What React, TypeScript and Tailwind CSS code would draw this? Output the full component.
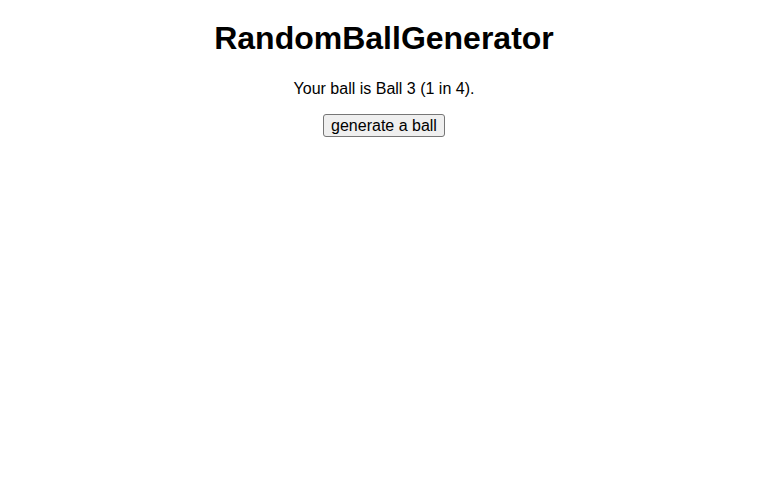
const App = () => {
  return (
    <div className="min-h-screen bg-white pt-[20px] text-center font-['Liberation_Sans',Arial,sans-serif] text-black">
      <h1 className="text-[32px] font-bold leading-[37px]">RandomBallGenerator</h1>
      <p className="mt-[23px] text-base leading-[18px]">Your ball is Ball 3 (1 in 4).</p>
      <button
        type="button"
        className="mt-[16px] rounded-[3px] border border-[#767676] bg-[#efefef] px-[7px] py-[1px] text-base leading-[19px] text-black"
      >
        generate a ball
      </button>
    </div>
  );
};

export default App;
